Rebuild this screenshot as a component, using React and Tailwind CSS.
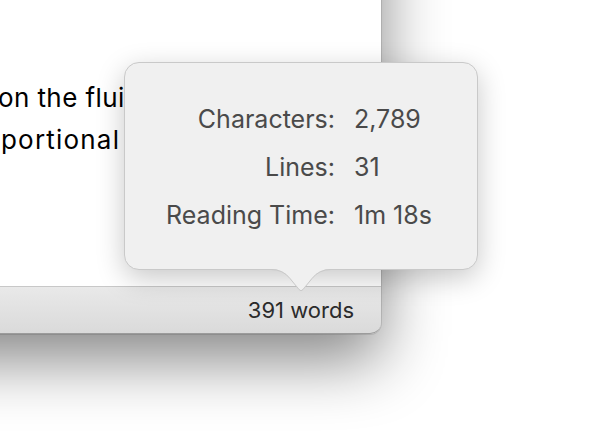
import React from 'react';

const stats = [
  { label: 'Characters:', value: '2,789' },
  { label: 'Lines:', value: '31' },
  { label: 'Reading Time:', value: '1m 18s' },
];

const StatsPopover = () => (
  <div className="absolute left-[124px] top-[62px] w-[354px] h-[208px]">
    <div className="relative h-full rounded-[15px] border border-[#c9c9c9] bg-[#f0f0f0] shadow-[0_8px_28px_rgba(0,0,0,0.22)] flex items-center">
      <div className="grid grid-cols-[210px_1fr] gap-x-[19px] w-full pt-[2px] text-[25px] leading-[48px] text-[#4a4a4a]">
        {stats.map(row => (
          <React.Fragment key={row.label}>
            <div className="text-right whitespace-nowrap">{row.label}</div>
            <div className="whitespace-nowrap">{row.value}</div>
          </React.Fragment>
        ))}
      </div>
    </div>
    {/* flèche vers le compteur de mots */}
    <svg
      className="absolute left-[147px] top-[205px]"
      width="60"
      height="26"
      viewBox="0 0 60 26"
    >
      <path d="M0 2 Q12 2 19 11 L28 22 Q30 24.5 32 22 L41 11 Q48 2 60 2 L60 0 L0 0 Z" fill="#f0f0f0" />
      <path d="M0 2.5 Q12 2.5 19 11.5 L28 22.5 Q30 25 32 22.5 L41 11.5 Q48 2.5 60 2.5" fill="none" stroke="#c9c9c9" strokeWidth="1" />
    </svg>
  </div>
);

const App = () => {
  return (
    <div
      className="relative w-[600px] h-[434px] overflow-hidden bg-white"
      style={{ fontFamily: 'Inter, "Noto Sans", sans-serif' }}
    >
      {/* Fenêtre de l'éditeur */}
      <div className="-ml-[200px] -mt-[100px] w-[581px] rounded-br-[11px] bg-white shadow-[0_0_0_1px_rgba(0,0,0,0.1),0_26px_64px_rgba(0,0,0,0.48)]">
        <div className="h-[386px] pt-[177px] pl-[200px] overflow-hidden text-[26px] leading-[42px] tracking-[0.4px] text-black">
          <div className="whitespace-nowrap -ml-[2px]">on the fluid dynamics of the system</div>
          <div className="whitespace-nowrap ml-[1px] tracking-[1.2px]">portional to the square of velocity</div>
        </div>
        <div className="h-[48px] border-t border-b border-t-[#c8c8c8] border-b-[#9c9c9c] rounded-br-[11px] bg-gradient-to-b from-[#e9e9e9] to-[#dadada] flex items-center justify-end pr-[27px]">
          <span className="text-[22px] text-[#2b2b2b]">391 words</span>
        </div>
      </div>

      <StatsPopover />
    </div>
  );
};

export default App;
